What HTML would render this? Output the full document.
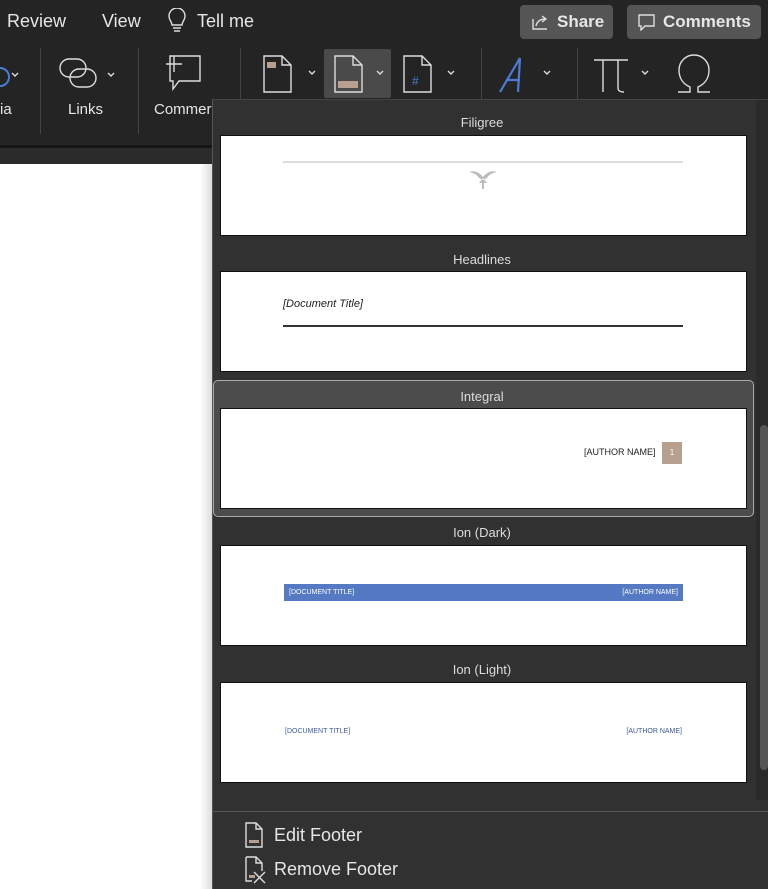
<!DOCTYPE html>
<html><head><meta charset="utf-8"><style>
*{margin:0;padding:0;box-sizing:border-box}
body{width:768px;height:889px;overflow:hidden;background:#fff;font-family:"Liberation Sans",sans-serif;position:relative}
.a{position:absolute}
.t{color:#e6e6e6;font-size:18px}
.lbl{position:absolute;left:212px;width:540px;text-align:center;color:#dcdcdc;font-size:13px}
.card{position:absolute;left:220px;width:527px;height:101px;background:#fff;border:1px solid #111}
.ic{stroke:#ddd;fill:none;stroke-width:1.4}
</style></head><body>
<div class="a" style="left:0;top:0;width:768px;height:145px;background:#242424"></div>
<div class="a" style="left:0;top:145px;width:768px;height:3px;background:#151515"></div>
<div class="a" style="left:0;top:148px;width:768px;height:16px;background:#2b2b2b"></div>
<div class="a" style="left:200px;top:164px;width:12px;height:725px;background:linear-gradient(90deg,#fff,#ddd)"></div>

<div class="a t" style="left:7px;top:11px">Review</div>
<div class="a t" style="left:102px;top:11px">View</div>
<svg class="a" style="left:166px;top:8px" width="22" height="26"><path class="ic" d="M6 17c0-3-3-5-3-9a8 8 0 0116 0c0 4-3 6-3 9z M7 20h8 M8 23h6"/></svg>
<div class="a t" style="left:197px;top:11px">Tell me</div>
<div class="a" style="left:520px;top:5px;width:93px;height:34px;background:#555;border-radius:4px"></div>
<svg class="a" style="left:531px;top:13px" width="20" height="18"><path class="ic" d="M2 6v10h14 M5 13c1-5 5-7 9-7 M11 3l4 3-4 3"/></svg>
<div class="a t" style="left:557px;top:12px;font-weight:bold;font-size:17px">Share</div>
<div class="a" style="left:627px;top:5px;width:134px;height:34px;background:#555;border-radius:4px"></div>
<svg class="a" style="left:637px;top:13px" width="20" height="18"><path class="ic" d="M2 2h15v11H8l-4 4v-4H2z"/></svg>
<div class="a t" style="left:663px;top:12px;font-weight:bold;font-size:17px">Comments</div>

<!-- ribbon -->
<svg class="a" style="left:0;top:55px" width="20" height="40"><circle cx="0" cy="22" r="9" fill="none" stroke="#4a7cd6" stroke-width="2"/><path class="ic" d="M12 18l3 3 3-3"/></svg>
<div class="a t" style="left:0;top:101px;font-size:15px">ia</div>
<div class="a" style="left:40px;top:48px;width:1px;height:86px;background:#444"></div>
<svg class="a" style="left:58px;top:55px" width="64" height="40"><rect class="ic" x="2" y="4" width="26" height="18" rx="9"/><rect class="ic" x="12" y="14" width="26" height="18" rx="9"/><path class="ic" d="M50 18l3 3 3-3"/></svg>
<div class="a t" style="left:68px;top:101px;font-size:15px">Links</div>
<div class="a" style="left:138px;top:48px;width:1px;height:86px;background:#444"></div>
<svg class="a" style="left:160px;top:52px" width="50" height="42"><path class="ic" d="M10 4h30v25H19l-6 8v-8h-3z M6 12h16 M14 4v16"/></svg>
<div class="a t" style="left:154px;top:101px;font-size:15px">Commer</div>
<div class="a" style="left:240px;top:48px;width:1px;height:86px;background:#444"></div>
<svg class="a" style="left:262px;top:52px" width="60" height="44"><path class="ic" d="M2 4h18l9 9v27H2z M20 4v9h9"/><rect x="5" y="10" width="9" height="6" fill="#b8a090"/><path class="ic" d="M47 19l3 3 3-3"/></svg>
<div class="a" style="left:324px;top:49px;width:67px;height:49px;background:#4a4a4a;border-radius:2px"></div>
<svg class="a" style="left:333px;top:52px" width="60" height="44"><path class="ic" d="M2 4h18l9 9v27H2z M20 4v9h9"/><rect x="5" y="29" width="20" height="7" fill="#b8a090"/><path class="ic" d="M44 19l3 3 3-3"/></svg>
<svg class="a" style="left:402px;top:52px" width="60" height="44"><path class="ic" d="M2 4h18l9 9v27H2z M20 4v9h9"/><text x="10" y="33" fill="#4a7cd6" font-size="12" font-family="Liberation Sans">#</text><path class="ic" d="M46 19l3 3 3-3"/></svg>
<div class="a" style="left:481px;top:48px;width:1px;height:86px;background:#444"></div>
<svg class="a" style="left:496px;top:52px" width="60" height="44"><path d="M4 40L24 6 M24 6L22 40 M10 28h14" fill="none" stroke="#4a7cd6" stroke-width="2.2"/><path class="ic" d="M48 19l3 3 3-3"/></svg>
<div class="a" style="left:577px;top:48px;width:1px;height:86px;background:#444"></div>
<svg class="a" style="left:590px;top:52px" width="60" height="44"><path class="ic" d="M4 8h34 M13 8v32 M28 8v28c0 3 2 4 6 4"/><path class="ic" d="M52 19l3 3 3-3"/></svg>
<svg class="a" style="left:674px;top:50px" width="44" height="46"><path class="ic" d="M4 42h12v-5c-7-3-11-9-11-17a15 15 0 0130 0c0 8-4 14-11 17v5h12"/></svg>

<!-- dropdown -->
<div class="a" style="left:212px;top:99px;width:556px;height:790px;background:#313131;border-left:1px solid #555;border-top:1px solid #444"></div>
<div class="a" style="left:756px;top:100px;width:12px;height:700px;background:#2a2a2a"></div>
<div class="a" style="left:760px;top:425px;width:8px;height:345px;background:#555;border-radius:4px"></div>

<div class="lbl" style="top:115px">Filigree</div>
<div class="card" style="top:135px">
 <div class="a" style="left:62px;top:25px;width:400px;height:2px;background:#ddd"></div>
 <svg class="a" style="left:246px;top:32px" width="32" height="22"><path d="M2 4c5-2 10 0 14 5c4-5 9-7 14-5c-4 1-8 2-10 6l-4 2l-4-2C10 6 6 5 2 4z M16 10l-4 5h3v6h2v-6h3z" fill="#bbb"/></svg>
</div>
<div class="lbl" style="top:252px">Headlines</div>
<div class="card" style="top:271px">
 <div class="a" style="left:62px;top:26px;font-size:11px;font-style:italic;color:#222">[Document Title]</div>
 <div class="a" style="left:62px;top:53px;width:400px;height:2px;background:#333"></div>
</div>
<div class="a" style="left:213px;top:380px;width:541px;height:137px;background:#4c4c4c;border:1px solid #aaa;border-radius:5px"></div>
<div class="lbl" style="top:389px">Integral</div>
<div class="card" style="top:408px">
 <div class="a" style="left:363px;top:38px;font-size:9px;color:#222">[AUTHOR NAME]</div>
 <div class="a" style="left:441px;top:33px;width:20px;height:22px;background:#b8a090;color:#fff;font-size:8px;text-align:center;line-height:22px">1</div>
</div>
<div class="lbl" style="top:525px">Ion (Dark)</div>
<div class="card" style="top:545px">
 <div class="a" style="left:63px;top:38px;width:399px;height:17px;background:#5579c2;color:#fff;font-size:7px;line-height:17px;padding:0 5px">[DOCUMENT TITLE]<span style="float:right">[AUTHOR NAME]</span></div>
</div>
<div class="lbl" style="top:662px">Ion (Light)</div>
<div class="card" style="top:682px">
 <div class="a" style="left:63px;top:45px;width:399px;color:#3b5aa0;font-size:7px;padding:0 1px">[DOCUMENT TITLE]<span style="float:right">[AUTHOR NAME]</span></div>
</div>
<div class="a" style="left:212px;top:811px;width:556px;height:1px;background:#555"></div>
<svg class="a" style="left:244px;top:821px" width="20" height="28"><path class="ic" d="M2 2h10l6 6v18H2z M12 2v6h6"/><rect x="5" y="19" width="10" height="3" fill="#b8a090"/></svg>
<div class="a t" style="left:274px;top:825px;font-size:18px">Edit Footer</div>
<svg class="a" style="left:244px;top:855px" width="24" height="30"><path class="ic" d="M2 2h10l6 6v8 M12 2v6h6 M2 2v24h6"/><rect x="5" y="20" width="6" height="3" fill="#b8a090"/><path class="ic" d="M10 17l11 11 M21 17L10 28"/></svg>
<div class="a t" style="left:274px;top:859px;font-size:18px">Remove Footer</div>
</body></html>
